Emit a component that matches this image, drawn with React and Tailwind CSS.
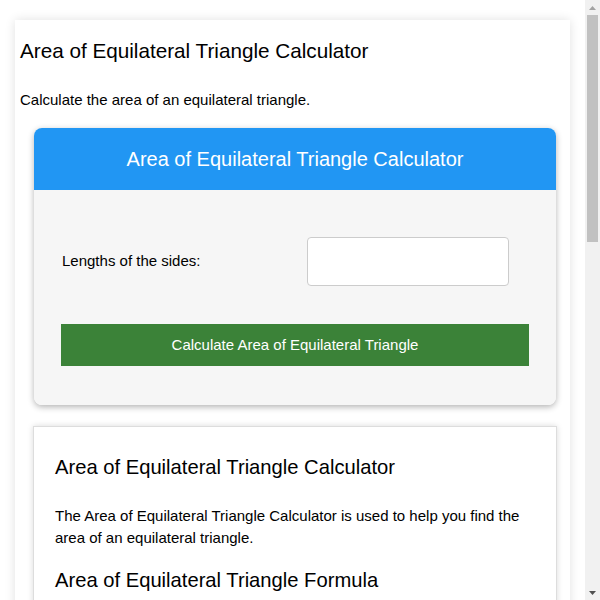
export default function App() {
  return (
    <div className="flex h-[600px] overflow-hidden bg-white text-black" style={{ fontFamily: '"Liberation Sans", Arial, sans-serif' }}>
      <div className="w-[585px] shrink-0 overflow-hidden px-[15px] pt-[20px]">
        <div className="w-[555px] bg-white px-[5px] pb-[30px] shadow-[0_0_10px_rgba(0,0,0,0.12)]">
          <h1 className="pt-[19px] text-[20.7px] leading-[24px] font-normal">Area of Equilateral Triangle Calculator</h1>
          <p className="mt-[28px] text-[15px] leading-[17px]">Calculate the area of an equilateral triangle.</p>

          {/* Calculator */}
          <div className="ml-[14px] mt-[20px] w-[522px] overflow-hidden rounded-[8px] shadow-[0_2px_6px_rgba(0,0,0,0.3)]">
            <div className="flex h-[62px] items-center justify-center bg-[#2196f3] text-[20px] text-white">
              Area of Equilateral Triangle Calculator
            </div>
            <div className="bg-[#f6f6f6] px-[27px] pt-[47px] pb-[39px]">
              <div className="flex h-[49px] items-center">
                <label className="w-[246px] pl-[1px] text-[15px]">Lengths of the sides:</label>
                <input type="text" className="h-[49px] w-[202px] rounded-[4px] border border-[#cccccc] bg-white" />
              </div>
              <button className="mt-[38px] flex h-[42px] w-full items-center justify-center bg-[#3b8238] text-[15px] text-white">
                Calculate Area of Equilateral Triangle
              </button>
            </div>
          </div>

          {/* Info */}
          <div className="ml-[13px] mt-[21px] w-[524px] border border-[#dddddd] bg-white px-[21px] pt-[28px] pb-[30px] shadow-[0_0_6px_rgba(0,0,0,0.15)]">
            <h2 className="text-[20.2px] leading-[24px]">Area of Equilateral Triangle Calculator</h2>
            <p className="mt-[26px] text-[15px] leading-[22px]">
              The Area of Equilateral Triangle Calculator is used to help you find the area of an equilateral triangle.
            </p>
            <h2 className="mt-[19px] text-[20.2px] leading-[24px]">Area of Equilateral Triangle Formula</h2>
            <p className="mt-[20px] text-[15px] leading-[22px]">
              The area of an equilateral triangle is calculated with the following formula:
            </p>
            <p className="mt-[16px] text-center text-[17px] leading-[22px]">A = (√3 / 4) × a²</p>
          </div>
        </div>
      </div>

      {/* page scrollbar */}
      <div className="flex w-[15px] shrink-0 flex-col items-center bg-[#f1f1f1]">
        <div className="flex h-[15px] w-full items-center justify-center">
          <svg width="7" height="4" viewBox="0 0 7 4"><path d="M3.5 0 L7 4 L0 4 Z" fill="#a3a3a3" /></svg>
        </div>
        <div className="h-[227px] w-[11px] bg-[#c1c1c1]" />
        <div className="flex-1" />
        <div className="flex h-[15px] w-full items-center justify-center">
          <svg width="7" height="4" viewBox="0 0 7 4"><path d="M0 0 L7 0 L3.5 4 Z" fill="#505050" /></svg>
        </div>
      </div>
    </div>
  )
}
